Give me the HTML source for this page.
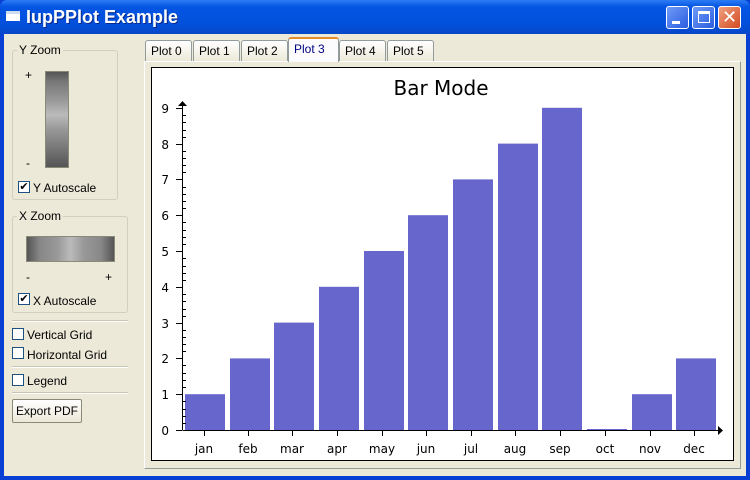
<!DOCTYPE html>
<html><head><meta charset="utf-8"><style>
*{margin:0;padding:0;box-sizing:border-box}
body{width:750px;height:480px;overflow:hidden;background:#0a3fd4;font-family:"Liberation Sans","DejaVu Sans",sans-serif;font-size:12px;position:relative}
.title{position:absolute;left:0;top:0;width:750px;height:34px;background:linear-gradient(#2d7cf5,#0555e3 20%,#0250dc 70%,#0747c8);border-radius:7px 7px 0 0}
.title span{position:absolute;left:26px;top:7px;color:#fff;font-weight:bold;font-size:18px;text-shadow:1px 1px #0a2a8a}
.ic{position:absolute;left:6px;top:11px;width:14px;height:10px;background:#fff;border-top:3px solid #cde}
.btn{position:absolute;top:6px;width:23px;height:23px;border:1px solid #fff;border-radius:3px;background:linear-gradient(135deg,#6f9bf8,#2a5de0)}
.client{position:absolute;left:4px;top:34px;width:742px;height:442px;background:#ECE9D8}
.grp{position:absolute;border:1px solid #d0d0bf;border-radius:3px}
.grp .lg{position:absolute;top:-8px;left:4px;background:#ECE9D8;padding:0 2px}
.t{position:absolute;font-size:12px;color:#000}
.cb{position:absolute;width:12px;height:12px;border:1px solid #1c5180;background:#fff;font-size:11px;line-height:10px;text-align:center;font-weight:bold}
.sep{position:absolute;left:8px;width:116px;height:2px;border-top:1px solid #c8c5b2;border-bottom:1px solid #fff}
.tab{position:absolute;top:6px;height:21px;border:1px solid #919b9c;border-bottom:none;border-radius:3px 3px 0 0;background:linear-gradient(#fff,#ECE9D8);padding:3px 0 0 5px;font-size:12px}
</style></head><body>
<div class="title"><div class="ic"></div><span>IupPPlot Example</span>
<div class="btn" style="left:666px"><div style="position:absolute;left:5px;top:14px;width:8px;height:3px;background:#fff"></div></div>
<div class="btn" style="left:692px"><div style="position:absolute;left:5px;top:4px;width:12px;height:12px;border:1px solid #fff;border-top:3px solid #fff"></div></div>
<div class="btn" style="left:718px;background:linear-gradient(135deg,#f0a080,#d04a20);color:#fff;font-size:18px;font-weight:bold;text-align:center;line-height:21px">✕</div>
</div>
<div class="client">
<div class="grp" style="left:8px;top:16px;width:106px;height:150px"><span class="lg">Y Zoom</span></div>
<div class="t" style="left:21px;top:34px">+</div><div class="t" style="left:22px;top:122px">-</div>
<div style="position:absolute;left:41px;top:37px;width:24px;height:97px;border:1px solid #8a8a78;background:linear-gradient(#555,#777 10%,#999 30%,#bbb 45%,#999 60%,#777 80%,#555)"></div>
<div class="cb" style="left:14px;top:147px">✔</div><div class="t" style="left:29px;top:147px">Y Autoscale</div>
<div class="grp" style="left:8px;top:182px;width:116px;height:97px"><span class="lg">X Zoom</span></div>
<div style="position:absolute;left:22px;top:202px;width:89px;height:26px;border:1px solid #8a8a78;background:linear-gradient(90deg,#555,#888 15%,#999 35%,#bbb 50%,#999 65%,#888 85%,#555)"></div>
<div class="t" style="left:22px;top:236px">-</div><div class="t" style="left:101px;top:236px">+</div>
<div class="cb" style="left:14px;top:259px">✔</div><div class="t" style="left:29px;top:260px">X Autoscale</div>
<div class="sep" style="top:286px"></div>
<div class="cb" style="left:8px;top:294px"></div><div class="t" style="left:23px;top:294px">Vertical Grid</div>
<div class="cb" style="left:8px;top:313px"></div><div class="t" style="left:23px;top:314px">Horizontal Grid</div>
<div class="sep" style="top:332px"></div>
<div class="cb" style="left:8px;top:340px"></div><div class="t" style="left:23px;top:340px">Legend</div>
<div class="sep" style="top:358px"></div>
<div style="position:absolute;left:8px;top:365px;width:70px;height:24px;border:1px solid #8a8a78;border-radius:2px;background:linear-gradient(#fff,#ECE9D8);padding:4px 0 0 3px">Export PDF</div>
<div style="position:absolute;left:140px;top:27px;width:597px;height:408px;border:1px solid #919b9c;border-top-color:#fff;border-left-color:#fff;background:#ECE9D8"></div>
<div class="tab" style="left:141px;width:47px">Plot 0</div>
<div class="tab" style="left:189px;width:47px">Plot 1</div>
<div class="tab" style="left:237px;width:47px">Plot 2</div>
<div class="tab" style="left:284px;top:3px;height:25px;width:51px;background:#fcfcfe;border-top:2px solid #e68b2c;color:#000080">Plot 3</div>
<div class="tab" style="left:335px;width:47px">Plot 4</div>
<div class="tab" style="left:383px;width:47px">Plot 5</div>
</div>
<svg style="position:absolute;left:151px;top:67px" width="584" height="395" viewBox="151 67 584 395">
<rect x="151.5" y="67.5" width="582" height="393" fill="#fff" stroke="#000"/>
<text x="441" y="95" font-size="20" text-anchor="middle" font-family="DejaVu Sans,sans-serif">Bar Mode</text>
<g fill="#6666cc">
<rect x="185" y="394.2" width="40" height="35.8"/><rect x="230" y="358.4" width="40" height="71.6"/>
<rect x="274" y="322.6" width="40" height="107.4"/><rect x="319" y="286.8" width="40" height="143.2"/>
<rect x="364" y="251" width="40" height="179"/><rect x="408" y="215.2" width="40" height="214.8"/>
<rect x="453" y="179.4" width="40" height="250.6"/><rect x="498" y="143.6" width="40" height="286.4"/>
<rect x="542" y="107.8" width="40" height="322.2"/><rect x="587" y="429" width="40" height="1"/>
<rect x="632" y="394.2" width="40" height="35.8"/><rect x="676" y="358.4" width="40" height="71.6"/>
</g>
<g stroke="#000" fill="none">
<path d="M182.5 430V104M182.5 430.5H718"/>
<path d="M176 430.5h6M176 394.5h6M176 358.5h6M176 323.5h6M176 287.5h6M176 251.5h6M176 215.5h6M176 179.5h6M176 144.5h6M176 108.5h6"/>
<path d="M182 423.5h4M182 416.5h4M182 409.5h4M182 401.5h4M182 387.5h4M182 380.5h4M182 373.5h4M182 365.5h4M182 351.5h4M182 344.5h4M182 337.5h4M182 330.5h4M182 316.5h4M182 309.5h4M182 301.5h4M182 294.5h4M182 280.5h4M182 273.5h4M182 266.5h4M182 258.5h4M182 244.5h4M182 237.5h4M182 230.5h4M182 222.5h4M182 208.5h4M182 201.5h4M182 194.5h4M182 187.5h4M182 172.5h4M182 165.5h4M182 158.5h4M182 151.5h4M182 137.5h4M182 130.5h4M182 122.5h4M182 115.5h4"/>
<path d="M204.5 430v6M248.5 430v6M292.5 430v6M337.5 430v6M382.5 430v6M426.5 430v6M471.5 430v6M515.5 430v6M560.5 430v6M605.5 430v6M650.5 430v6M694.5 430v6"/>
</g>
<path d="M178 106l4.5-5 4.5 5zM718 426l5 4.5-5 4.5z" fill="#000"/>
<g font-size="12" font-family="DejaVu Sans,sans-serif" text-anchor="end">
<text x="169" y="435">0</text><text x="169" y="399">1</text><text x="169" y="363">2</text><text x="169" y="328">3</text><text x="169" y="292">4</text><text x="169" y="256">5</text><text x="169" y="220">6</text><text x="169" y="184">7</text><text x="169" y="149">8</text><text x="169" y="113">9</text>
</g>
<g font-size="12" font-family="DejaVu Sans,sans-serif" text-anchor="middle">
<text x="204" y="453">jan</text><text x="248" y="453">feb</text><text x="292" y="453">mar</text><text x="337" y="453">apr</text><text x="382" y="453">may</text><text x="426" y="453">jun</text><text x="471" y="453">jul</text><text x="515" y="453">aug</text><text x="560" y="453">sep</text><text x="605" y="453">oct</text><text x="650" y="453">nov</text><text x="694" y="453">dec</text>
</g>
</svg>
</body></html>
